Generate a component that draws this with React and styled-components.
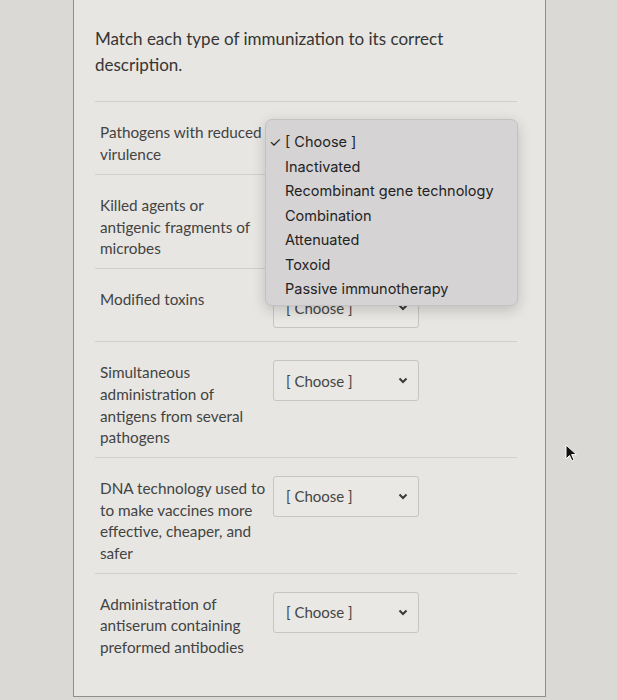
import styled, { createGlobalStyle } from 'styled-components'

const GlobalStyle = createGlobalStyle`
    html, body {
        margin: 0;
        padding: 0;
        background: #dad9d5;
    }
    body {
        font-family: Lato, "Open Sans", sans-serif;
        color: #3f3f3f;
        overflow: hidden;
    }
`

const Page = styled.div`
    position: relative;
    width: 617px;
    height: 700px;
    overflow: hidden;
`

const Panel = styled.div`
    margin-left: 73px;
    width: 473px;
    height: 697px;
    box-sizing: border-box;
    background: #e7e6e2;
    border: 1px solid #8f8f8c;
    border-top: none;
    padding: 26px 28px 0 21px;
`

const Title = styled.p`
    margin: 0 0 23px;
    font-size: 17px;
    line-height: 26px;
    color: #353535;
`

const Row = styled.div`
    display: flex;
    align-items: flex-start;
    gap: 5px;
    padding: 18px 0 8px 5px;
    border-top: 1px solid #d0cfcb;
`

const Label = styled.div`
    width: 168px;
    margin-top: 2px;
    font-size: 15.3px;
    line-height: 21.7px;
    color: #434343;
`

const SelectWrap = styled.div`
    position: relative;
    margin-bottom: 5px;
`

const Select = styled.div`
    width: 146px;
    height: 41px;
    box-sizing: border-box;
    border: 1px solid #c6c5c1;
    border-radius: 3px;
    background: #e9e8e4;
    display: flex;
    align-items: center;
    justify-content: space-between;
    padding: 0 10px 0 12px;
    font-size: 15px;
    color: #454545;
`

const Menu = styled.ul`
    position: absolute;
    left: -8px;
    top: -1px;
    width: 251px;
    margin: 0;
    padding: 10px 0 3px;
    list-style: none;
    background: #d6d3d4;
    border: 1px solid #c4c1c2;
    border-radius: 7px;
    box-shadow: 0 4px 14px rgba(0, 0, 0, 0.18);
    z-index: 2;
`

const Item = styled.li`
    position: relative;
    padding-left: 19px;
    font-family: Inter, "Liberation Sans", sans-serif;
    font-size: 14.5px;
    line-height: 24.5px;
    color: #232323;
`

const Check = styled.span`
    position: absolute;
    left: 3px;
    top: 0;
    font-size: 14px;
`

const Cursor = styled.svg`
    position: absolute;
    left: 564px;
    top: 444px;
`

const options = [
    'Inactivated',
    'Recombinant gene technology',
    'Combination',
    'Attenuated',
    'Toxoid',
    'Passive immunotherapy',
]

const rows = [
    'Pathogens with reduced virulence',
    'Killed agents or antigenic fragments of microbes',
    'Modified toxins',
    'Simultaneous administration of antigens from several pathogens',
    'DNA technology used to to make vaccines more effective, cheaper, and safer',
    'Administration of antiserum containing preformed antibodies',
]

function Chevron() {
    return (
        <svg width='10' height='7' viewBox='0 0 10 7'>
            <path d='M1.5 1.5 L5 5 L8.5 1.5' fill='none' stroke='#3a3a3a' strokeWidth='2' />
        </svg>
    )
}

export default function App() {
    return (
        <Page>
            <GlobalStyle />
            <Panel>
                <Title>Match each type of immunization to its correct description.</Title>
                {rows.map((text, i) => (
                    <Row key={i}>
                        <Label>{text}</Label>
                        <SelectWrap>
                            <Select>
                                <span>[ Choose ]</span>
                                <Chevron />
                            </Select>
                            {i === 0 && (
                                <Menu>
                                    <Item>
                                        <Check>✓</Check>[ Choose ]
                                    </Item>
                                    {options.map(o => (
                                        <Item key={o}>{o}</Item>
                                    ))}
                                </Menu>
                            )}
                        </SelectWrap>
                    </Row>
                ))}
            </Panel>
            <Cursor width='14' height='20' viewBox='0 0 14 20'>
                <path d='M2 1 L2 15 L5.5 11.5 L8 17 L10 16 L7.6 10.6 L12.5 10.6 Z' fill='#111' stroke='#fff' strokeWidth='1' />
            </Cursor>
        </Page>
    )
}
